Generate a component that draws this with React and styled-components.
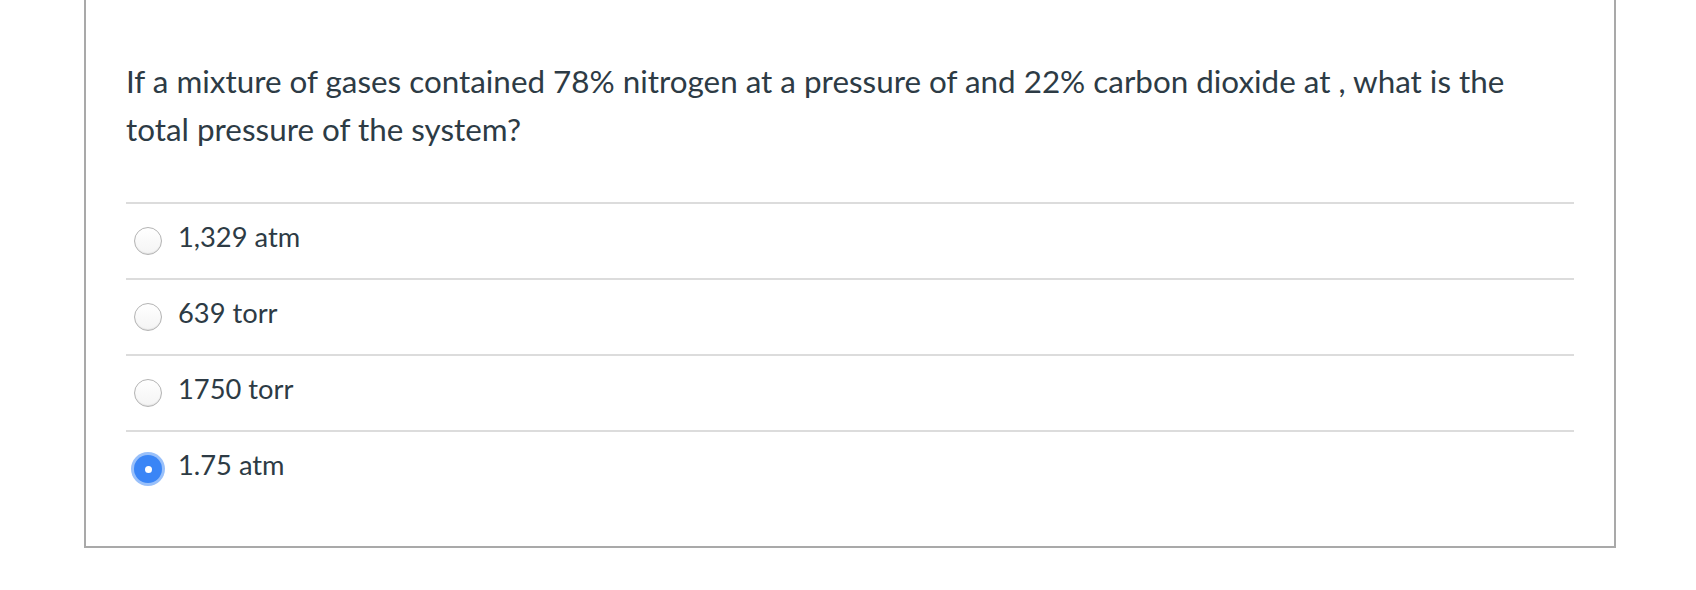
import styled, { createGlobalStyle } from "styled-components";

const GlobalStyle = createGlobalStyle`
  body {
    margin: 0;
    background: #ffffff;
    font-family: Lato, "Noto Sans", sans-serif;
    color: #2d3b45;
  }
`;

const answers = [
  { id: "a", label: "1,329 atm" },
  { id: "b", label: "639 torr" },
  { id: "c", label: "1750 torr" },
  { id: "d", label: "1.75 atm", checked: true },
];

const App = () => {
  return (
    <>
      <GlobalStyle />
      <Page>
        <Card>
          <Question>
            If a mixture of gases contained 78% nitrogen at a pressure of and
            22% carbon dioxide at , what is the total pressure of the system?
          </Question>
          <AnswerList>
            {answers.map((a) => (
              <AnswerRow key={a.id}>
                <Radio checked={a.checked} />
                <Label>{a.label}</Label>
              </AnswerRow>
            ))}
          </AnswerList>
        </Card>
      </Page>
    </>
  );
};

const Page = styled.div`
  width: 1696px;
  height: 590px;
  padding-left: 84px;
  box-sizing: border-box;
`;

const Card = styled.div`
  width: 1532px;
  box-sizing: border-box;
  border: 2px solid #a9a9a9;
  border-top: none;
  padding: 57px 40px 40px;
`;

const Question = styled.div`
  font-size: 31.4px;
  line-height: 48px;
  margin-bottom: 49px;
`;

const AnswerList = styled.div`
  display: flex;
  flex-direction: column;
`;

const AnswerRow = styled.div`
  display: flex;
  align-items: center;
  gap: 16px;
  height: 76px;
  box-sizing: border-box;
  border-top: 2px solid #dcdcdc;
  padding-left: 8px;
`;

const Radio = styled.span`
  position: relative;
  flex: none;
  width: 28px;
  height: 28px;
  border-radius: 50%;
  box-sizing: border-box;
  background: ${({ checked }) =>
    checked ? "#3a85f6" : "linear-gradient(#ffffff, #f4f4f4)"};
  border: ${({ checked }) => (checked ? "none" : "1.5px solid #b4b4b4")};
  box-shadow: ${({ checked }) =>
    checked
      ? "0 0 0 3px rgba(70, 140, 245, 0.55)"
      : "inset 0 -1px 1px rgba(0, 0, 0, 0.08)"};

  &::after {
    content: "";
    display: ${({ checked }) => (checked ? "block" : "none")};
    position: absolute;
    left: 50%;
    top: 50%;
    width: 7px;
    height: 7px;
    margin: -3.5px 0 0 -3.5px;
    border-radius: 50%;
    background: #ffffff;
  }
`;

const Label = styled.span`
  font-size: 27.3px;
  line-height: 28px;
  margin-top: -8px;
`;

export default App;
